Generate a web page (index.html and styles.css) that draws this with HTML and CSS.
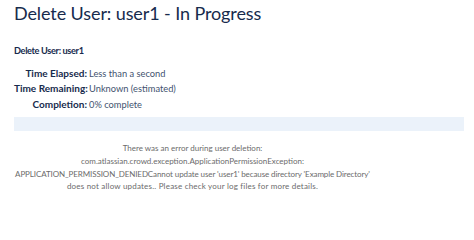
FILE: index.html
```html
<!DOCTYPE html>
<html>
<head>
<meta charset="utf-8">
<link rel="stylesheet" href="styles.css">
</head>
<body>
<div class="page">
  <h1 class="title">Delete User: user1 - In Progress</h1>
  <h2 class="subtitle">Delete User: user1</h2>
  <div class="details">
    <div class="label">Time Elapsed:</div><div class="value">Less than a second</div>
    <div class="label">Time Remaining:</div><div class="value">Unknown (estimated)</div>
    <div class="label">Completion:</div><div class="value">0% complete</div>
  </div>
  <div class="progress"><div class="progress-fill" style="width:0%"></div></div>
  <div class="error">
    <span class="error-line">There was an error during user deletion:</span>
    <span class="error-line">com.atlassian.crowd.exception.ApplicationPermissionException:</span>
    <span class="error-line error-line-long">APPLICATION_PERMISSION_DENIEDCannot update user 'user1' because directory 'Example Directory'</span>
    <span class="error-line error-line-wide">does not allow updates.. Please check your log files for more details.</span>
  </div>
</div>
</body>
</html>
```

FILE: styles.css
```css
html, body {
  margin: 0;
  padding: 0;
  background: #ffffff;
}
body {
  font-family: Lato, "Open Sans", sans-serif;
  color: #172b4d;
}
.page {
  padding: 0 10px 0 14px;
}
.title {
  margin: 0;
  font-size: 18px;
  line-height: 26px;
  font-weight: 400;
  letter-spacing: -0.1px;
  color: #172b4d;
}
.subtitle {
  margin: 18px 0 0 0;
  font-size: 9.2px;
  line-height: 13px;
  font-weight: 700;
  letter-spacing: -0.35px;
  color: #172b4d;
}
.details {
  display: grid;
  grid-template-columns: 73px auto;
  column-gap: 2px;
  row-gap: 0;
  margin-top: 9px;
  font-size: 10px;
  line-height: 15.4px;
}
.label {
  text-align: right;
  font-weight: 700;
  color: #172b4d;
  white-space: nowrap;
}
.value {
  font-size: 9.3px;
  color: #42526e;
}
.progress {
  margin-top: 5px;
  height: 14px;
  background: #ebf2fa;
}
.progress-fill {
  height: 100%;
  background: #0052cc;
}
.error {
  width: 357px;
  margin-top: 11px;
  display: flex;
  flex-direction: column;
  align-items: center;
  font-size: 8px;
  line-height: 12.7px;
  color: #6b6b6b;
}
.error-line {
  white-space: nowrap;
}
.error-line-long {
  letter-spacing: -0.1px;
}
.error-line-wide {
  letter-spacing: 0.2px;
}
```
